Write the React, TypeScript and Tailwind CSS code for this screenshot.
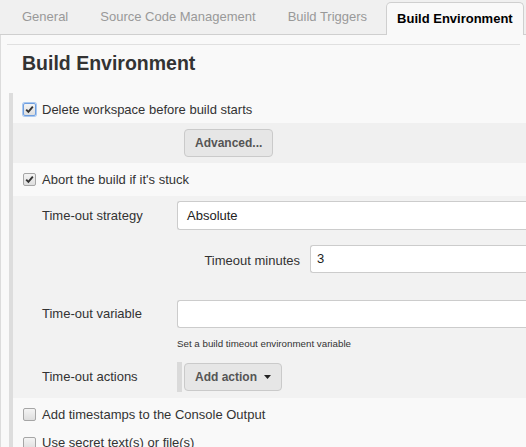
import React from "react";

function Checkbox({ checked, focused }: { checked?: boolean; focused?: boolean }) {
  return (
    <span
      className={`relative inline-flex h-[13px] w-[13px] shrink-0 items-center justify-center rounded-[2px] border bg-gradient-to-b from-[#f4f4f4] to-[#dedede] ${
        focused ? "border-[#6f9fe0] ring-1 ring-[#a9c8f0]" : "border-[#a6a6a6]"
      }`}
    >
      {checked && (
        <svg width="9" height="9" viewBox="0 0 9 9">
          <path d="M1.2 4.6 L3.4 6.9 L7.8 1.6" fill="none" stroke="#333" strokeWidth="1.9" />
        </svg>
      )}
    </span>
  );
}

function CheckRow({ label, checked, focused, h }: { label: string; checked?: boolean; focused?: boolean; h: string }) {
  return (
    <div className={`flex items-center gap-[6px] pl-[10px] whitespace-nowrap ${h}`}>
      <Checkbox checked={checked} focused={focused} />
      <span className="text-[#333]">{label}</span>
    </div>
  );
}

function Button({ children }: { children: React.ReactNode }) {
  return (
    <button className="flex h-full items-center whitespace-nowrap rounded-[4px] border border-[#cacaca] bg-[#e6e6e6] px-[10px] text-[12px] font-bold text-[#555]">
      {children}
    </button>
  );
}

export default function App() {
  const tabs = ["General", "Source Code Management", "Build Triggers"];
  return (
    <div
      className="h-[447px] w-full overflow-hidden bg-[#f9f9f9] text-[13px] text-[#333]"
      style={{ fontFamily: '"Liberation Sans", Arial, sans-serif' }}
    >
      {/* tabs */}
      <div className="flex h-[35px] items-end whitespace-nowrap border-b border-[#cfcfcf] bg-[#f0f0f0] pl-[6px]">
        {tabs.map((t) => (
          <div key={t} className="flex h-[34px] shrink-0 items-center px-4 text-[#999]">
            {t}
          </div>
        ))}
        <div className="-mb-px ml-[3px] flex h-[33px] shrink-0 items-center rounded-t-[5px] border border-b-0 border-[#cfcfcf] bg-[#f9f9f9] pl-[10px] pr-[10px] font-bold text-black">
          Build Environment
        </div>
      </div>

      <div className="h-full border-l border-[#dcdcdc]">
        <div className="px-[6px] pt-[9px]">
          <div className="border-t border-[#e0e0e0]" />
        </div>
        <div className="mt-[6px] mb-[18px] h-[24px] pl-[21px] text-[19.5px] font-bold leading-[24px] text-[#333]">
          Build Environment
        </div>

        {/* section */}
        <div className="ml-[8px] h-full border-l-4 border-[#dddddd]">
          <CheckRow label="Delete workspace before build starts" checked focused h="h-[30px] pt-[3px]" />
          <div className="flex h-[40px] bg-[#f0f0f0] py-[6px] pl-[171px]">
            <Button>Advanced...</Button>
          </div>
          <CheckRow label="Abort the build if it's stuck" checked h="h-[33px]" />

          <div className="bg-[#f2f2f2] pt-[5px] pb-[6px]">
            <div className="flex h-[29px] items-center">
              <div className="w-[164px] shrink-0 pl-[29px]">Time-out strategy</div>
              <div className="flex h-full flex-1 items-center rounded-l-[3px] border border-r-0 border-[#ccc] bg-white pl-[9px] text-[#222]">
                Absolute
              </div>
            </div>

            <div className="mt-[15px] flex h-[28px] items-center">
              <div className="w-[164px] shrink-0" />
              <div className="w-[133px] shrink-0 pr-[10px] pt-[3px] text-right">Timeout minutes</div>
              <div className="flex h-full flex-1 items-center rounded-l-[3px] border border-r-0 border-[#ccc] bg-white pl-[6px] text-[#222]">
                3
              </div>
            </div>

            <div className="mt-[27px] flex h-[28px] items-center">
              <div className="w-[164px] shrink-0 pl-[29px]">Time-out variable</div>
              <div className="h-full flex-1 rounded-l-[3px] border border-r-0 border-[#ccc] bg-white" />
            </div>

            <div className="mt-[10px] flex h-[12px] items-center">
              <div className="w-[164px] shrink-0" />
              <div className="text-[9.75px] leading-[12px] text-[#333]">Set a build timeout environment variable</div>
            </div>

            <div className="mt-[12px] flex h-[30px] items-center">
              <div className="w-[164px] shrink-0 pl-[29px]">Time-out actions</div>
              <div className="flex h-full items-stretch">
                <div className="mr-[2px] w-[5px] bg-[#dadada]" />
                <div className="py-[1px]">
                  <Button>
                    Add action
                    <svg className="ml-[7px]" width="7" height="4" viewBox="0 0 7 4">
                      <path d="M0 0 H7 L3.5 4 Z" fill="#222" />
                    </svg>
                  </Button>
                </div>
              </div>
            </div>
          </div>

          <CheckRow label="Add timestamps to the Console Output" h="h-[30px] pt-[3px]" />
          <CheckRow label="Use secret text(s) or file(s)" h="h-[30px]" />
        </div>
      </div>
    </div>
  );
}
